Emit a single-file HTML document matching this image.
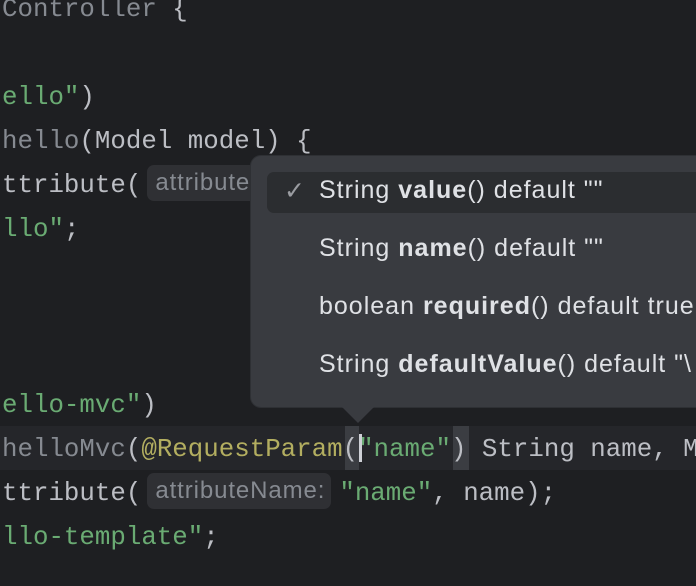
<!DOCTYPE html>
<html><head><style>
html,body{margin:0;padding:0;}
body{width:696px;height:586px;background:#1e1f22;overflow:hidden;position:relative;font-family:"Liberation Mono",monospace;}
.l{position:absolute;left:2px;height:44px;line-height:44px;font-size:25.8px;color:#bcbec4;white-space:pre;}
.g{color:#6aab73}.d{color:#868a91}.y{color:#b3ae60}
.hint{display:inline-block;font-family:"Liberation Sans",sans-serif;font-size:24px;letter-spacing:0.9px;color:#868a91;background:#2f3034;border-radius:7px;height:36px;line-height:36px;padding:0 6px 0 8px;vertical-align:middle;margin:0 8px 4px 6px;}
.cur{position:absolute;left:0;top:426px;width:696px;height:44px;background:#25262a;}
.pop{position:absolute;left:250px;top:155px;width:470px;height:253px;background:#393b40;border-radius:11px;border:1px solid #2e3034;box-sizing:border-box;}
.arrow{position:absolute;left:342px;top:407px;width:0;height:0;border-left:16px solid transparent;border-right:16px solid transparent;border-top:16px solid #393b40;}
.it{position:absolute;left:68px;font-family:"Liberation Sans",sans-serif;font-size:25px;letter-spacing:1px;color:#dfe1e5;white-space:pre;}
.it b{font-weight:bold;}
.sel{position:absolute;left:16px;top:16px;width:460px;height:41px;background:#2b2d30;border-radius:7px;}
</style></head><body>
<div class="cur"></div>
<div style="position:absolute;left:345px;top:426px;width:14px;height:44px;background:#3b3d42"></div>
<div style="position:absolute;left:453px;top:426px;width:16px;height:44px;background:#3b3d42"></div>
<div class="l" style="top:-12px"><span class="d">Controller</span> {</div>
<div class="l" style="top:76px"><span class="g">ello"</span>)</div>
<div class="l" style="top:120px"><span class="d">hello</span>(Model model) {</div>
<div class="l" style="top:164px">ttribute(<span class="hint">attributeName:</span></div>
<div class="l" style="top:208px"><span class="g">llo"</span>;</div>
<div class="l" style="top:384px"><span class="g">ello-mvc"</span>)</div>
<div class="l" style="top:428px"><span class="d">helloMvc</span>(<span class="y">@RequestParam</span>(<span class="g">"name"</span>) String name, M</div>
<div class="l" style="top:472px">ttribute(<span class="hint">attributeName:</span><span class="g">"name"</span>, name);</div>
<div class="l" style="top:516px"><span class="g">llo-template"</span>;</div>
<div style="position:absolute;left:359px;top:434px;width:3px;height:28px;background:#ced0d6"></div>
<div class="pop">
<div class="sel"></div>
<div style="position:absolute;left:33px;top:20px;font-family:'DejaVu Sans',sans-serif;font-size:25px;color:#9a9ca1">✓</div>
<div class="it" style="top:20px">String <b>value</b>() default ""</div>
<div class="it" style="top:78px">String <b>name</b>() default ""</div>
<div class="it" style="top:136px">boolean <b>required</b>() default true</div>
<div class="it" style="top:194px">String <b>defaultValue</b>() default "\</div>
</div>
<div class="arrow"></div>
</body></html>
